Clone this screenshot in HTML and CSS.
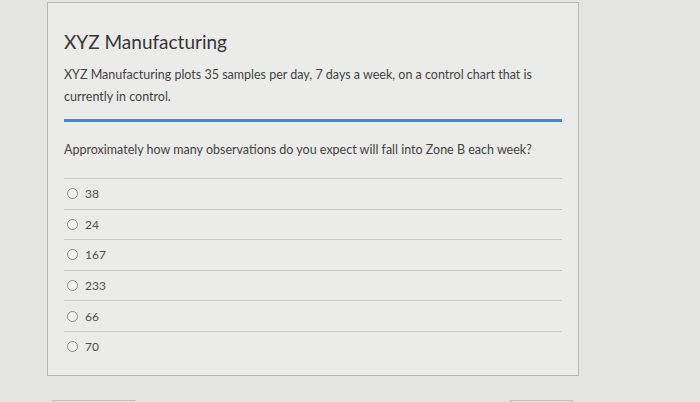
FILE: index.html
```html
<!DOCTYPE html>
<html lang="en">
<head>
<meta charset="utf-8">
<title>XYZ Manufacturing</title>
<link rel="stylesheet" href="styles.css">
</head>
<body>
<div class="page">
  <div class="card">
    <h2 class="title">XYZ Manufacturing</h2>
    <p class="desc">XYZ Manufacturing plots 35 samples per day, 7 days a week, on a control chart that is currently in control.</p>
    <div class="rule"></div>
    <p class="question">Approximately how many observations do you expect will fall into Zone B each week?</p>
    <ul class="options">
      <li class="option"><span class="radio"></span><span class="label">38</span></li>
      <li class="option"><span class="radio"></span><span class="label">24</span></li>
      <li class="option"><span class="radio"></span><span class="label">167</span></li>
      <li class="option"><span class="radio"></span><span class="label">233</span></li>
      <li class="option"><span class="radio"></span><span class="label">66</span></li>
      <li class="option"><span class="radio"></span><span class="label">70</span></li>
    </ul>
  </div>
  <div class="footer">
    <div class="btn btn-left"></div>
    <div class="btn btn-right"></div>
  </div>
</div>
</body>
</html>
```
FILE: styles.css
```css
html, body {
  margin: 0;
  padding: 0;
}
body {
  background: #e4e4e2;
  font-family: Lato, "Open Sans", sans-serif;
  color: #3d3d3d;
  overflow: hidden;
  height: 402px;
}
.page {
  padding: 2px 0 0 47px;
  width: 532px;
}
.card {
  box-sizing: border-box;
  width: 532px;
  height: 374px;
  border: 1px solid #b7b7b5;
  background: #ebebe9;
  padding: 27px 16px 0;
}
.title {
  margin: 0;
  font-size: 19px;
  line-height: 24px;
  font-weight: 400;
  color: #363636;
}
.desc {
  margin: 10px 0 0;
  font-size: 12.5px;
  line-height: 22px;
  color: #434343;
}
.rule {
  margin-top: 11px;
  height: 3px;
  background: #4d87c2;
}
.question {
  margin: 17px 0 0;
  font-size: 12.5px;
  line-height: 22px;
  color: #434343;
}
.options {
  list-style: none;
  margin: 17px 0 0;
  padding: 0;
}
.option {
  display: flex;
  align-items: center;
  gap: 7px;
  height: 29.6px;
  padding-left: 3px;
  border-top: 1px solid #c9c9c7;
  font-size: 12px;
  color: #505050;
}
.radio {
  box-sizing: border-box;
  width: 11px;
  height: 11px;
  border: 1px solid #8a8a8a;
  border-radius: 50%;
  background: #f2f2f0;
}
.footer {
  display: flex;
  justify-content: space-between;
  padding: 24px 6px 0 5px;
}
.btn {
  box-sizing: border-box;
  height: 2px;
  border: 1px solid #bdbdbb;
  border-bottom: none;
  background: #ececea;
}
.btn-left {
  width: 83px;
}
.btn-right {
  width: 63px;
}
```
